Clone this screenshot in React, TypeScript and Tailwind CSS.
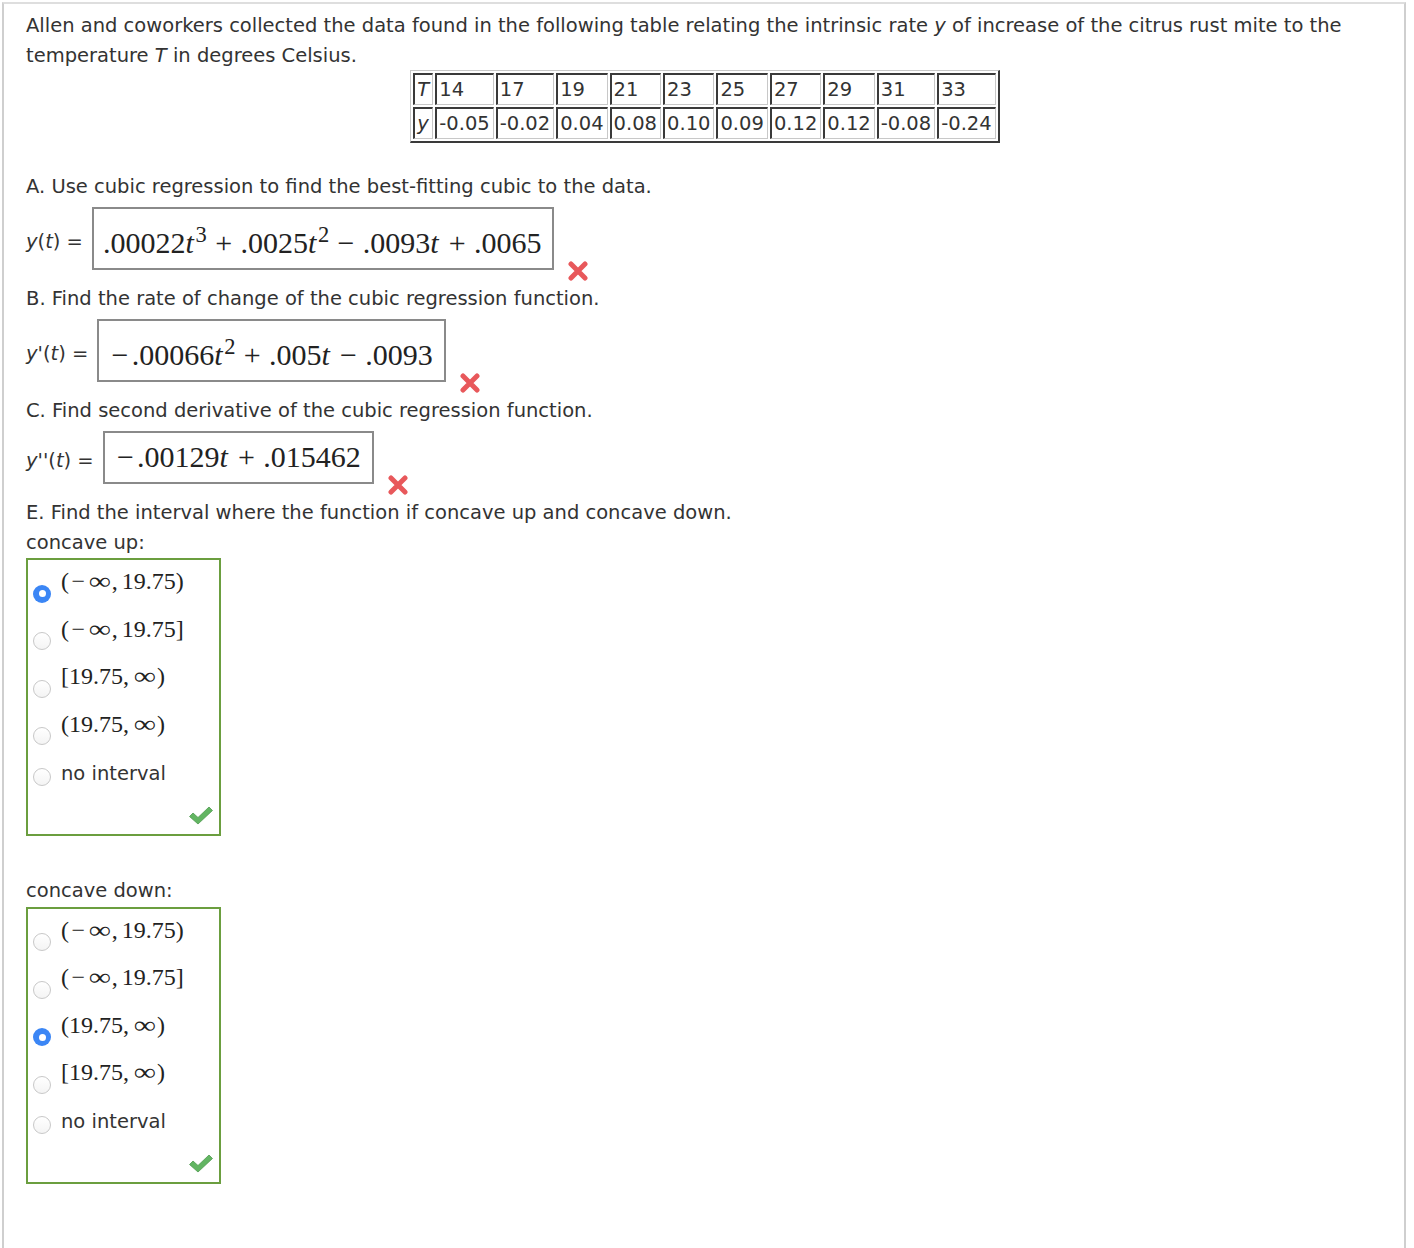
import React from "react";

const serif = "font-['Liberation_Serif','Times_New_Roman',serif]";

function RedX() {
  return (
    <svg width="20" height="20" viewBox="0 0 20 20" className="shrink-0">
      <path d="M3 3 L17 17 M17 3 L3 17" stroke="#e8585b" strokeWidth="5" strokeLinecap="round" />
    </svg>
  );
}

function Check() {
  return (
    <svg width="24" height="19" viewBox="0 0 24 19">
      <path
        d="M0.5 10.5 L4 7 L9 11.5 L20 1 L23.5 4.5 L9 18 Z"
        fill="#62b562"
        stroke="#4f9a4f"
        strokeWidth="0.8"
        strokeLinejoin="round"
      />
    </svg>
  );
}

function Radio({ checked }: { checked?: boolean }) {
  if (checked) {
    return (
      <span className="w-[18px] h-[18px] rounded-full bg-[#3b86f5] flex items-center justify-center shrink-0">
        <span className="block w-[7px] h-[7px] rounded-full bg-white" />
      </span>
    );
  }
  return <span className="block w-[18px] h-[18px] rounded-full border border-[#c8c8c8] bg-gradient-to-b from-white to-[#f4f4f4] shrink-0" />;
}

// binary operator with TeX-like spacing
const Op = ({ c }: { c: string }) => (
  <span className="inline-block w-[0.778em] mx-[0.17em] text-center">{c}</span>
);
const T = () => <i className="inline-block pr-[0.06em]">t</i>;
const Minus = () => <span className="inline-block w-[0.778em] text-center">−</span>;
const Inf = () => <span className="inline-block w-[1em] text-center scale-x-[1.3]">∞</span>;

function AnswerRow({
  label,
  children,
  pad,
}: {
  label: React.ReactNode;
  children: React.ReactNode;
  pad: string;
}) {
  return (
    <div className="flex items-center mt-[5px]">
      <span className="mt-[7px] whitespace-pre">{label}</span>
      <div className={`ml-[9px] border-2 border-[#8a8a8a] pl-[9px] pr-[11px] ${pad} ${serif} text-[30px] leading-[32px] text-[#222]`}>
        {children}
      </div>
      <div className="self-end mb-[-11px] ml-[14px]">
        <RedX />
      </div>
    </div>
  );
}

type Opt = { m: React.ReactNode; text?: boolean; checked?: boolean };

function Choices({ opts }: { opts: Opt[] }) {
  return (
    <div className="w-[195px] border-2 border-[#6b9e3f]">
      {opts.map((o, i) => (
        <div key={i} className="h-[47.5px] flex items-center pl-[5px]">
          <span className={o.text ? "mt-[6px]" : "mt-[20px]"}>
            <Radio checked={o.checked} />
          </span>
          <span className={`ml-[10px] ${o.text ? "" : `${serif} text-[24px] leading-[30px] mb-[5px] text-[#222]`}`}>{o.m}</span>
        </div>
      ))}
      <div className="flex justify-end pr-[6px] pt-[8px] pb-[9px]">
        <Check />
      </div>
    </div>
  );
}

const NegInf = () => (
  <>
    <Minus />
    <Inf />,<span className="ml-[0.17em]">19.75</span>
  </>
);
const PosInf = () => (
  <>
    19.75,<span className="ml-[0.17em]" />
    <Inf />
  </>
);

export default function App() {
  const temps = ["14", "17", "19", "21", "23", "25", "27", "29", "31", "33"];
  const ys = ["-0.05", "-0.02", "0.04", "0.08", "0.10", "0.09", "0.12", "0.12", "-0.08", "-0.24"];
  const cell =
    "border-t-2 border-l-2 border-r border-b border-t-[#3a3a3a] border-l-[#3a3a3a] border-r-[#c8c8c8] border-b-[#c8c8c8] pl-[2px] pr-[3px] h-[32px] leading-[28px] text-left font-normal";

  const upOpts: Opt[] = [
    { m: <>(<NegInf />)</>, checked: true },
    { m: <>(<NegInf />]</> },
    { m: <>[<PosInf />)</> },
    { m: <>(<PosInf />)</> },
    { m: "no interval", text: true },
  ];
  const downOpts: Opt[] = [
    { m: <>(<NegInf />)</> },
    { m: <>(<NegInf />]</> },
    { m: <>(<PosInf />)</>, checked: true },
    { m: <>[<PosInf />)</> },
    { m: "no interval", text: true },
  ];

  return (
    <div className="bg-white">
      <div className="ml-[2px] mt-[2px] w-[1404px] h-[1246px] border-x-2 border-t-2 border-x-[#cfcfcf] border-t-[#dedede] pl-[22px] pr-[20px] pt-[7px] font-['DejaVu_Sans',Verdana,sans-serif] text-[19.5px] leading-[30px] text-[#333]">
        <p>
          Allen and coworkers collected the data found in the following table relating the intrinsic rate <i>y</i> of
          increase of the citrus rust mite to the temperature <i>T</i> in degrees Celsius.
        </p>

        <table className="mx-auto -mt-[1px] border-separate border-spacing-[2px] border-t border-l border-r-2 border-b-2 border-t-[#c8c8c8] border-l-[#c8c8c8] border-r-[#3a3a3a] border-b-[#3a3a3a]">
          <tbody>
            <tr>
              <td className={cell}>
                <i>T</i>
              </td>
              {temps.map((t) => (
                <td key={t} className={cell}>
                  {t}
                </td>
              ))}
            </tr>
            <tr>
              <td className={cell}>
                <i>y</i>
              </td>
              {ys.map((v, i) => (
                <td key={i} className={cell}>
                  {v}
                </td>
              ))}
            </tr>
          </tbody>
        </table>

        <p className="mt-[29px]">A. Use cubic regression to find the best-fitting cubic to the data.</p>
        <AnswerRow
          label={
            <>
              <i>y</i>(<i>t</i>) =
            </>
          }
          pad="pt-[18px] pb-[9px]"
        >
          .00022<T />
          <sup>3</sup>
          <Op c="+" />
          .0025<T />
          <sup>2</sup>
          <Op c="−" />
          .0093<T />
          <Op c="+" />
          .0065
        </AnswerRow>

        <p className="mt-[14px]">B. Find the rate of change of the cubic regression function.</p>
        <AnswerRow
          label={
            <>
              <i>y</i>'(<i>t</i>) =
            </>
          }
          pad="pt-[18px] pb-[9px]"
        >
          <Minus />
          .00066<T />
          <sup>2</sup>
          <Op c="+" />
          .005<T />
          <Op c="−" />
          .0093
        </AnswerRow>

        <p className="mt-[14px]">C. Find second derivative of the cubic regression function.</p>
        <AnswerRow
          label={
            <>
              <i>y</i>''(<i>t</i>) =
            </>
          }
          pad="pt-[8px] pb-[9px]"
        >
          <Minus />
          .00129<T />
          <Op c="+" />
          .015462
        </AnswerRow>

        <p className="mt-[14px]">E. Find the interval where the function if concave up and concave down.</p>
        <p>concave up:</p>
        <Choices opts={upOpts} />

        <p className="mt-[40px]">concave down:</p>
        <div className="mt-[1px]">
          <Choices opts={downOpts} />
        </div>
      </div>
    </div>
  );
}
